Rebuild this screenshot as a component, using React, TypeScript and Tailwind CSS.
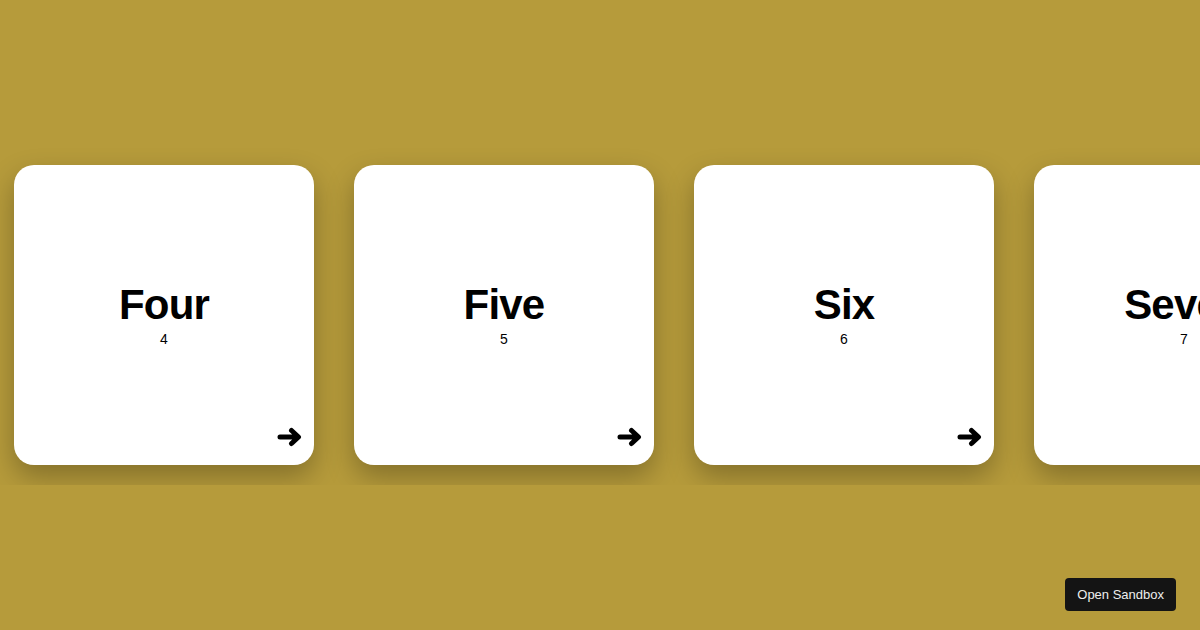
import React from "react";

type Item = {
  title: string;
  num: number;
};

const items: Item[] = [
  { title: "Four", num: 4 },
  { title: "Five", num: 5 },
  { title: "Six", num: 6 },
  { title: "Seven", num: 7 },
  { title: "Eight", num: 8 },
];

const Arrow = () => (
  <svg width="26" height="20" viewBox="0 0 26 20" fill="none">
    <path
      d="M3 10H21M14.5 3.5L21.5 10L14.5 16.5"
      stroke="#000"
      strokeWidth="5"
      strokeLinecap="round"
      strokeLinejoin="round"
    />
  </svg>
);

const Card: React.FC<{ item: Item }> = ({ item }) => (
  <div className="relative w-[300px] h-[300px] shrink-0 bg-white rounded-[20px] shadow-[0_12px_28px_rgba(0,0,0,0.28)] flex flex-col items-center justify-center">
    <h2 className="text-[42px] leading-none font-bold tracking-[-0.8px] text-black">
      {item.title}
    </h2>
    <p className="text-[14px] leading-4 mt-[5px] text-black">{item.num}</p>
    <span className="absolute right-[11px] bottom-[18px]">
      <Arrow />
    </span>
  </div>
);

export default function App() {
  return (
    <div
      className="w-[1200px] h-[630px] bg-[#b69b3b] flex flex-col justify-center relative overflow-hidden"
      style={{ fontFamily: '"Liberation Sans", Arial, sans-serif' }}
    >
      <div className="flex gap-[40px] pl-[14px] py-[20px] overflow-hidden">
        {items.map((it) => (
          <Card key={it.num} item={it} />
        ))}
      </div>
      <button className="absolute right-[24px] bottom-[19px] h-[33px] px-[12px] rounded-[4px] bg-[#141414] text-[#eeeeee] text-[13px]">
        Open Sandbox
      </button>
    </div>
  );
}
